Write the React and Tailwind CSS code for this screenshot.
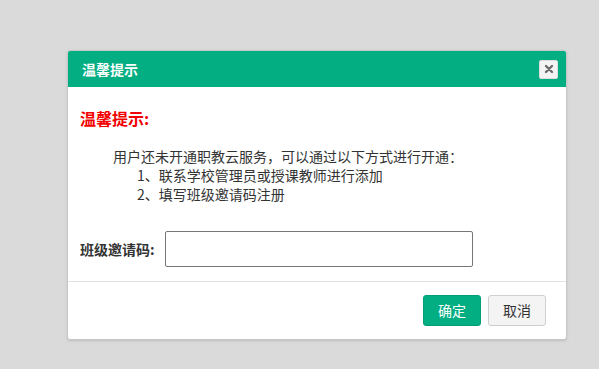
import { useState } from "react";

export default function App() {
  const [code, setCode] = useState("");

  return (
    <div
      className="min-h-[369px] w-full bg-[#dadada] pt-[50px] pl-[67px]"
      style={{ fontFamily: '"Microsoft YaHei", "Noto Sans CJK SC", sans-serif' }}
    >
      <div className="w-[500px] h-[290px] bg-white rounded-[3px] border border-[#c8c8c8] flex flex-col overflow-hidden shadow-sm">
        {/* header */}
        <div className="h-[36px] bg-[#03ae83] flex items-center justify-between pl-[14px] pr-[8px] shrink-0">
          <span className="text-white text-[14px] font-bold">温馨提示</span>
          <button className="w-[19px] h-[19px] bg-[#f4f4f4] border border-[#dcdcdc] rounded-[2px] flex items-center justify-center">
            <svg width="10" height="10" viewBox="0 0 10 10">
              <path d="M2 2 L8 8 M8 2 L2 8" stroke="#6b6b6b" strokeWidth="2.4" strokeLinecap="round" />
            </svg>
          </button>
        </div>

        {/* body */}
        <div className="px-[12px] pt-[20px] pb-[14px] border-b border-[#e3e3e3]">
          <div className="text-[#f30000] text-[16px] font-semibold leading-[22px]">温馨提示:</div>
          <div className="mt-[18px] text-[#333] text-[14px] leading-[19px]">
            <p className="pl-[33px]">用户还未开通职教云服务，可以通过以下方式进行开通：</p>
            <p className="pl-[57px]">1、联系学校管理员或授课教师进行添加</p>
            <p className="pl-[57px]">2、填写班级邀请码注册</p>
          </div>
          <div className="mt-[27px] flex items-center">
            <label className="text-[14px] font-bold text-[#333] w-[85px]">班级邀请码:</label>
            <input
              value={code}
              onChange={(e) => setCode(e.target.value)}
              className="w-[308px] h-[36px] border border-[#767676] rounded-[2px] outline-none px-2 text-[14px]"
            />
          </div>
        </div>

        {/* footer */}
        <div className="flex justify-end gap-[7px] pr-[20px] pt-[13px]">
          <button className="w-[58px] h-[31px] bg-[#03ae83] border border-[#029e77] rounded-[3px] text-white text-[14px]">
            确定
          </button>
          <button className="w-[58px] h-[31px] bg-[#f4f4f4] border border-[#cfcfcf] rounded-[3px] text-[#333] text-[14px]">
            取消
          </button>
        </div>
      </div>
    </div>
  );
}
